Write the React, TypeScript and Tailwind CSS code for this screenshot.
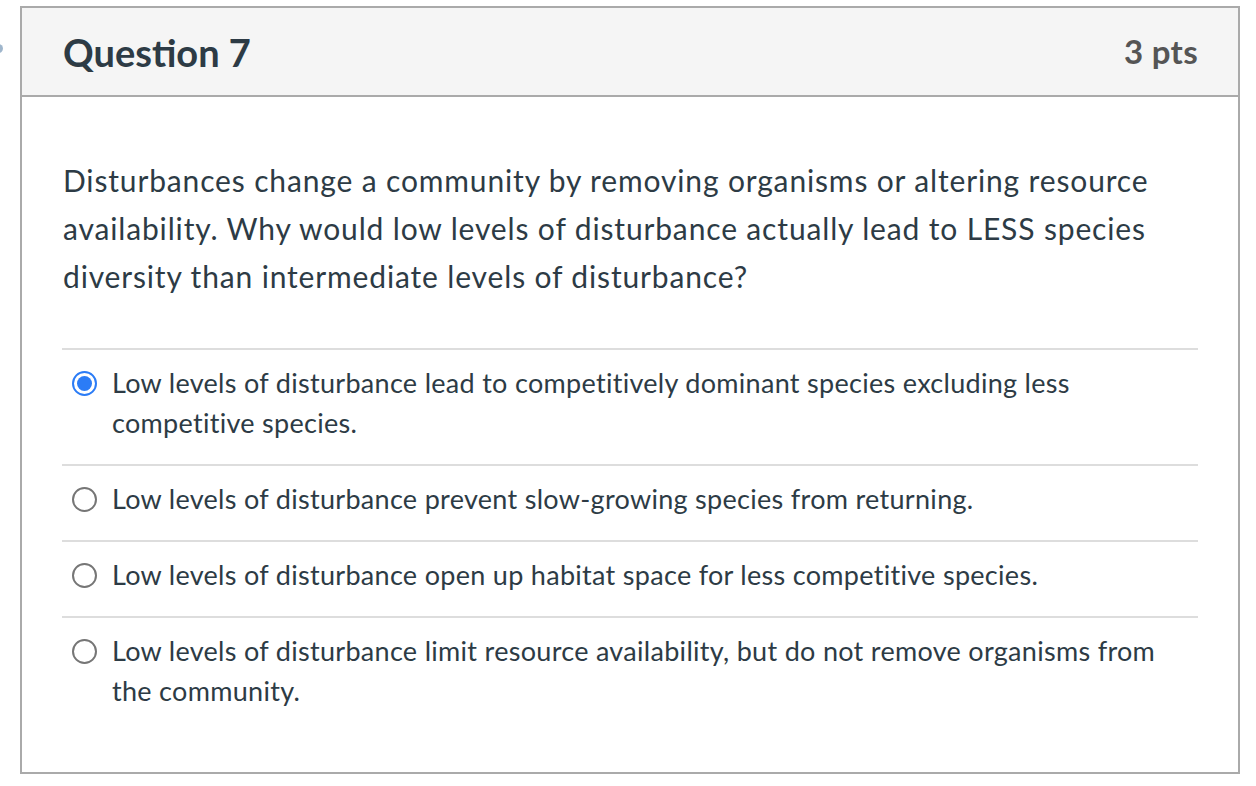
import React from 'react'

interface Answer {
  id: string
  text: string
  checked?: boolean
}

const answers: Answer[] = [
  {
    id: 'a1',
    text: 'Low levels of disturbance lead to competitively dominant species excluding less competitive species.',
    checked: true,
  },
  { id: 'a2', text: 'Low levels of disturbance prevent slow-growing species from returning.' },
  { id: 'a3', text: 'Low levels of disturbance open up habitat space for less competitive species.' },
  {
    id: 'a4',
    text: 'Low levels of disturbance limit resource availability, but do not remove organisms from the community.',
  },
]

// Canvas-style radio button
const Radio: React.FC<{ checked?: boolean }> = ({ checked }) =>
  checked ? (
    <span className="flex h-[25px] w-[25px] shrink-0 items-center justify-center rounded-full border-2 border-[#2b7cf6] bg-white">
      <span className="h-[15px] w-[15px] rounded-full bg-[#2b7cf6]" />
    </span>
  ) : (
    <span className="h-[25px] w-[25px] shrink-0 rounded-full border-2 border-[#767676] bg-white" />
  )

export default function App() {
  return (
    <div
      className="relative h-[786px] w-[1256px] overflow-hidden bg-white pl-[20px] pt-[6px] text-[#2d3b45]"
      style={{ fontFamily: 'Lato, "Open Sans", sans-serif' }}
    >
      {/* stray nav dot peeking in from the left edge */}
      <span className="absolute left-[-6px] top-[44px] h-[9px] w-[9px] rounded-full bg-[#9fb6cc]" />

      <div className="h-[768px] w-[1220px] border-2 border-[#aaaaaa]">
        <div className="flex h-[89px] items-center justify-between border-b-2 border-[#aaaaaa] bg-[#f5f5f5] pl-[41px] pr-[40px]">
          <h2 className="text-[38px] font-bold leading-none">Question 7</h2>
          <span className="text-[33px] font-bold leading-none tracking-[0.3px] text-[#555555]">3 pts</span>
        </div>

        <div className="px-[40px] pt-[59px]">
          <p className="pl-[1px] text-[30px] leading-[48px] tracking-[0.85px]">
            Disturbances change a community by removing organisms or altering resource availability. Why would low
            levels of disturbance actually lead to LESS species diversity than intermediate levels of disturbance?
          </p>

          <div className="mt-[48px]">
            {answers.map((a) => (
              <div key={a.id} className="flex gap-[15px] border-t-2 border-[#dddddd] pb-[21px] pl-[10px] pt-[13px]">
                <div className="flex h-[40px] items-center">
                  <Radio checked={a.checked} />
                </div>
                <span className="text-[27px] leading-[40px] tracking-[0.3px]">{a.text}</span>
              </div>
            ))}
          </div>
        </div>
      </div>
    </div>
  )
}
